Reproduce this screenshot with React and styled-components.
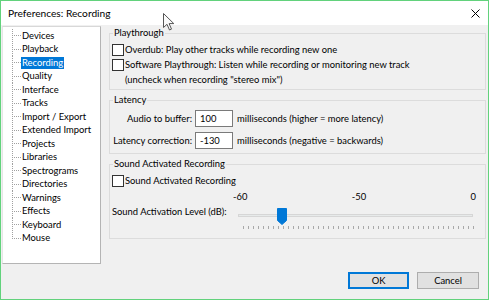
import styled, { createGlobalStyle } from 'styled-components';

const GlobalStyle = createGlobalStyle`
  html, body {
    margin: 0;
    padding: 0;
    background: #ffffff;
  }
  * {
    box-sizing: border-box;
  }
`;

const Window = styled.div`
  position: relative;
  width: 489px;
  height: 300px;
  border: 1px solid #62d27c;
  display: flex;
  flex-direction: column;
  font-family: Lato, 'Liberation Sans', sans-serif;
  font-size: 9.4px;
  color: #000;
  background: #f0f0f0;
`;

const TitleBar = styled.div`
  height: 24px;
  flex: none;
  background: #fff;
  display: flex;
  align-items: center;
  justify-content: space-between;
  padding: 0 8px 0 7px;
  font-size: 10.2px;
`;

const CloseButton = styled.svg`
  width: 9px;
  height: 9px;
`;

const Cursor = styled.svg`
  position: absolute;
  left: 162px;
  top: 12px;
  width: 12px;
  height: 18px;
`;

const Main = styled.div`
  display: flex;
  padding: 1px 2px 0 1px;
  height: 239px;
`;

const Tree = styled.ul`
  list-style: none;
  margin: 0;
  padding: 2px 0 0 0;
  width: 99px;
  height: 238px;
  background: #fff;
  border: 1px solid #b4b4b4;
  border-left-color: #e6e6e6;
  border-top-color: #d8d8d8;
`;

const dots = '#a0a0a0';

const TreeItem = styled.li`
  display: flex;
  align-items: center;
  height: 13.5px;
`;

const Connector = styled.span`
  align-self: stretch;
  width: 9px;
  margin-left: 9px;
  flex: none;
  background-image: repeating-linear-gradient(to bottom, ${dots} 0 1px, transparent 1px 2px),
    repeating-linear-gradient(to right, ${dots} 0 1px, transparent 1px 2px);
  background-size: 1px ${(p) => (p.last ? '50%' : '100%')}, 100% 1px;
  background-position: left top, left center;
  background-repeat: no-repeat;
`;

const TreeLabel = styled.span`
  padding: 0 1px;
  line-height: 12px;
  white-space: nowrap;
  background: ${(p) => (p.selected ? '#0078d7' : 'transparent')};
  color: ${(p) => (p.selected ? '#fff' : '#000')};
`;

const Panel = styled.div`
  flex: 1;
  display: flex;
  flex-direction: column;
  gap: 3px;
  margin-left: 8px;
`;

const Group = styled.fieldset`
  margin: 0;
  padding: ${(p) => p.pad || '0 2px 4px 2px'};
  border: 1px solid #dcdcdc;
  min-width: 0;
`;

const Legend = styled.legend`
  padding: 0 1px;
  margin-left: 1px;
  line-height: 14px;
`;

const CheckRow = styled.label`
  display: flex;
  align-items: center;
  gap: 1px;
  height: 15px;
  white-space: nowrap;
`;

const Box = styled.span`
  width: 12px;
  height: 12px;
  flex: none;
  border: 1px solid #333;
  background: #fff;
`;

const Note = styled.div`
  padding-left: 13px;
  height: 15px;
  line-height: 15px;
`;

const LatencyGrid = styled.div`
  display: grid;
  grid-template-columns: 80px 38px 1fr;
  column-gap: 3px;
  row-gap: 5px;
  align-items: center;
  padding-top: 3px;
`;

const FieldLabel = styled.span`
  justify-self: end;
  white-space: nowrap;
`;

const Input = styled.div`
  height: 17px;
  border: 1px solid #7a7a7a;
  background: #fff;
  padding: 0 4px;
  line-height: 15px;
`;

const Unit = styled.span`
  padding-left: 1px;
  white-space: nowrap;
`;

const SliderGrid = styled.div`
  display: grid;
  grid-template-columns: 121px 1fr;
  align-items: center;
  padding: 1px 4px 5px 0;
`;

const Scale = styled.div`
  display: flex;
  justify-content: space-between;
  height: 15px;
  line-height: 15px;
  padding-right: 3px;
`;

const SliderLabel = styled.span`
  white-space: nowrap;
  align-self: start;
  padding-top: 2px;
`;

const Slider = styled.div`
  display: flex;
  flex-direction: column;
  padding: 0 6px 0 5px;
`;

const Track = styled.div`
  position: relative;
  height: 3px;
  margin-top: 10px;
  background: #e7eaea;
  border: 1px solid #d6d6d6;
`;

const Thumb = styled.svg`
  position: absolute;
  left: 38px;
  top: -7px;
  width: 10px;
  height: 17px;
`;

const Ticks = styled.div`
  height: 3px;
  margin: 9px -3px 0 5px;
  background-image: repeating-linear-gradient(to right, #a8a8a8 0 1px, transparent 1px 5px);
`;

const Footer = styled.div`
  flex: 1;
  display: flex;
  justify-content: flex-end;
  align-items: flex-start;
  gap: 8px;
  padding: 8px 9px 0 0;
`;

const Button = styled.button`
  width: ${(p) => p.width}px;
  height: 17px;
  padding: 0;
  font: inherit;
  color: #000;
  background: #e1e1e1;
  border: 1px solid ${(p) => (p.primary ? '#0078d7' : '#adadad')};
  box-shadow: ${(p) => (p.primary ? 'inset 0 0 0 1px #0078d7' : 'none')};
`;

const pages = [
  'Devices', 'Playback', 'Recording', 'Quality', 'Interface', 'Tracks',
  'Import / Export', 'Extended Import', 'Projects', 'Libraries', 'Spectrograms',
  'Directories', 'Warnings', 'Effects', 'Keyboard', 'Mouse',
];

export default function App() {
  return (
    <>
      <GlobalStyle />
      <Window>
        <TitleBar>
          <span>Preferences: Recording</span>
          <CloseButton viewBox="0 0 9 9">
            <path d="M0.5 0.5 L8.5 8.5 M8.5 0.5 L0.5 8.5" stroke="#000" strokeWidth="1" />
          </CloseButton>
        </TitleBar>
        <Main>
          <Tree>
            {pages.map((p, i) => (
              <TreeItem key={p}>
                <Connector last={i === pages.length - 1} />
                <TreeLabel selected={p === 'Recording'}>{p}</TreeLabel>
              </TreeItem>
            ))}
          </Tree>
          <Panel>
            <Group pad="2px 2px 2px 2px">
              <Legend>Playthrough</Legend>
              <CheckRow><Box />Overdub: Play other tracks while recording new one</CheckRow>
              <CheckRow><Box />Software Playthrough: Listen while recording or monitoring new track</CheckRow>
              <Note>(uncheck when recording "stereo mix")</Note>
            </Group>
            <Group>
              <Legend>Latency</Legend>
              <LatencyGrid>
                <FieldLabel>Audio to buffer:</FieldLabel>
                <Input>100</Input>
                <Unit>milliseconds (higher = more latency)</Unit>
                <FieldLabel>Latency correction:</FieldLabel>
                <Input>-130</Input>
                <Unit>milliseconds (negative = backwards)</Unit>
              </LatencyGrid>
            </Group>
            <Group pad="2px 2px 4px 2px">
              <Legend>Sound Activated Recording</Legend>
              <CheckRow><Box />Sound Activated Recording</CheckRow>
              <SliderGrid>
                <span />
                <Scale>
                  <span>-60</span>
                  <span>-50</span>
                  <span>0</span>
                </Scale>
                <SliderLabel>Sound Activation Level (dB):</SliderLabel>
                <Slider>
                  <Track>
                    <Thumb viewBox="0 0 10 17">
                      <path d="M0.5 0.5 H9.5 V12.5 L5 16.5 L0.5 12.5 Z" fill="#0078d7" stroke="#0078d7" />
                    </Thumb>
                  </Track>
                  <Ticks />
                </Slider>
              </SliderGrid>
            </Group>
          </Panel>
        </Main>
        <Footer>
          <Button primary width={61}>OK</Button>
          <Button width={62}>Cancel</Button>
        </Footer>
        <Cursor viewBox="0 0 12 18">
          <path d="M0.5 0.5 V14.5 L4 11.3 L6.5 17 L8.5 16.1 L6.1 10.6 H10.8 Z" fill="#fafafa" stroke="#555" strokeWidth="1" strokeLinejoin="round" />
        </Cursor>
      </Window>
    </>
  );
}
